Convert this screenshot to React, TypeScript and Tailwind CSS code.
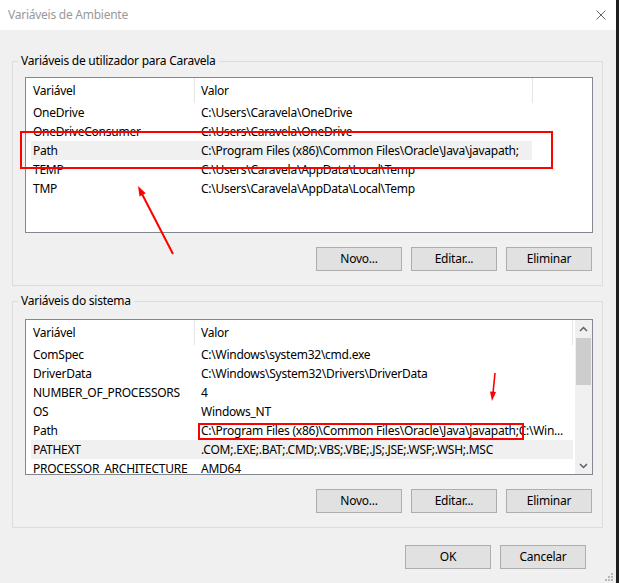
// Variáveis de Ambiente — Windows 10 environment variables dialog, with red annotations.

type Row = [string, string]

const userRows: Row[] = [
  ['OneDrive', 'C:\\Users\\Caravela\\OneDrive'],
  ['OneDriveConsumer', 'C:\\Users\\Caravela\\OneDrive'],
  ['Path', 'C:\\Program Files (x86)\\Common Files\\Oracle\\Java\\javapath;'],
  ['TEMP', 'C:\\Users\\Caravela\\AppData\\Local\\Temp'],
  ['TMP', 'C:\\Users\\Caravela\\AppData\\Local\\Temp'],
]

const systemRows: Row[] = [
  ['ComSpec', 'C:\\Windows\\system32\\cmd.exe'],
  ['DriverData', 'C:\\Windows\\System32\\Drivers\\DriverData'],
  ['NUMBER_OF_PROCESSORS', '4'],
  ['OS', 'Windows_NT'],
  ['Path', 'C:\\Program Files (x86)\\Common Files\\Oracle\\Java\\javapath;C:\\Win...'],
  ['PATHEXT', '.COM;.EXE;.BAT;.CMD;.VBS;.VBE;.JS;.JSE;.WSF;.WSH;.MSC'],
  ['PROCESSOR_ARCHITECTURE', 'AMD64'],
]

export default function App() {
  return (
    <div className="flex h-[583px] w-[619px] bg-[#1f1f1f] font-['Noto_Sans',sans-serif] text-[12px] tracking-[-0.25px] text-black">
      <div className="relative flex h-[583px] w-[616px] flex-col overflow-hidden bg-[#f0f0f0]">
        <div className="flex h-[30px] shrink-0 items-center justify-between bg-white pl-[8px] pr-[10px] text-[#999999]">
          <span>Variáveis de Ambiente</span>
          <svg width="10" height="10" viewBox="0 0 10 10" className="text-[#666]">
            <path d="M0.5 0.5 L9.5 9.5 M9.5 0.5 L0.5 9.5" stroke="currentColor" strokeWidth="1" fill="none" />
          </svg>
        </div>

        <div className="flex flex-col pl-[12px] pr-[13px] pt-[23px]">
          <Group title="Variáveis de utilizador para Caravela" listGap="mt-[8px]">
            <ListView rows={userRows} selected={2} />
          </Group>
          <div className="mt-[7px]">
            <Group title="Variáveis do sistema" listGap="mt-[10px]">
              <ListView rows={systemRows} selected={5} scroll />
            </Group>
          </div>
          <div className="mt-[17px] flex justify-end gap-[9px] pr-[17px]">
            <Button label="OK" />
            <Button label="Cancelar" />
          </div>
        </div>

        {/* annotations */}
        <div className="pointer-events-none absolute left-[20px] top-[131px] h-[38px] w-[533px] border-2 border-[#ff0000]" />
        <div className="pointer-events-none absolute left-[198px] top-[423px] h-[17px] w-[326px] border-2 border-[#ff0000]" />
        <svg className="pointer-events-none absolute left-0 top-0" width="616" height="583">
          <line x1="173" y1="254" x2="141" y2="192" stroke="#ff0000" strokeWidth="2" />
          <polygon points="138,186 145.7,193.3 139.5,196.5" fill="#ff0000" />
          <line x1="495" y1="373" x2="493" y2="393" stroke="#ff0000" strokeWidth="1.6" />
          <polygon points="492,401 496,392 490,391.5" fill="#ff0000" />
          <g fill="#b8b8b8">
            <rect x="611" y="573" width="2" height="2" />
            <rect x="608" y="576" width="2" height="2" />
            <rect x="611" y="576" width="2" height="2" />
            <rect x="605" y="579" width="2" height="2" />
            <rect x="608" y="579" width="2" height="2" />
            <rect x="611" y="579" width="2" height="2" />
          </g>
        </svg>
      </div>
      <div className="w-[3px]" />
    </div>
  )
}

function Group({
  title,
  listGap,
  children,
}: {
  title: string
  listGap: string
  children: React.ReactNode
}) {
  return (
    <fieldset className="border border-[#dcdcdc] pb-[14px] pl-[12px] pr-[9px]">
      <legend className="-ml-[7px] px-[3px] leading-[16px]">{title}</legend>
      <div className={listGap}>{children}</div>
      <div className="mt-[14px] flex justify-end gap-[9px] pr-[1px]">
        <Button label="Novo..." />
        <Button label="Editar..." />
        <Button label="Eliminar" />
      </div>
    </fieldset>
  )
}

function Button({ label }: { label: string }) {
  return (
    <button className="h-[24px] w-[86px] border border-[#adadad] bg-[#e1e1e1] leading-[22px] text-black">
      {label}
    </button>
  )
}

function ListView({ rows, selected, scroll }: { rows: Row[]; selected: number; scroll?: boolean }) {
  return (
    <div className="flex h-[156px] overflow-hidden border border-[#828790] bg-white">
      <div className="min-w-0 flex-1">
        <div className="flex h-[25px]">
          <div className="flex w-[169px] items-center border-r border-[#e5e5e5] pl-[7px]">Variável</div>
          <div className={`flex items-center border-r border-[#e5e5e5] pl-[6px] ${scroll ? 'w-[378px]' : 'w-[338px]'}`}>
            Valor
          </div>
        </div>
        {rows.map(([name, value], i) => (
          <div
            key={name}
            className={`ml-[5px] flex h-[19px] items-center whitespace-nowrap ${scroll ? 'w-[542px]' : 'w-[501px]'} ${
              i === selected ? 'bg-[#f0f0f0]' : ''
            }`}
          >
            <div className="w-[163px] shrink-0 overflow-hidden pl-[2px]">{name}</div>
            <div className="min-w-0 flex-1 overflow-hidden pl-[7px]">{value}</div>
          </div>
        ))}
      </div>
      {scroll && (
        <div className="flex w-[17px] shrink-0 flex-col bg-[#f0f0f0]">
          <div className="flex h-[17px] items-center justify-center">
            <svg width="9" height="6" viewBox="0 0 9 6">
              <path d="M1 5 L4.5 1.5 L8 5" stroke="#606060" strokeWidth="1.5" fill="none" />
            </svg>
          </div>
          <div className="mx-[1px] mt-[1px] h-[47px] bg-[#cdcdcd]" />
          <div className="flex-1" />
          <div className="flex h-[17px] items-center justify-center">
            <svg width="9" height="6" viewBox="0 0 9 6">
              <path d="M1 1 L4.5 4.5 L8 1" stroke="#606060" strokeWidth="1.5" fill="none" />
            </svg>
          </div>
        </div>
      )}
    </div>
  )
}
